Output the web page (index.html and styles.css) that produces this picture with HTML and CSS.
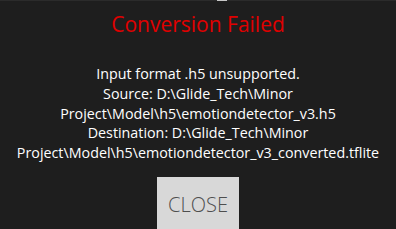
FILE: index.html
```html
<!DOCTYPE html>
<html>
<head>
<meta charset="utf-8">
<link rel="stylesheet" href="styles.css">
</head>
<body>
<div class="dialog">
  <div class="topbar"><span class="grip"></span></div>
  <h1 class="title">Conversion Failed</h1>
  <p class="message">Input format .h5 unsupported.<br>Source: D:\Glide_Tech\Minor Project\Model\h5\emotiondetector_v3.h5<br>Destination: D:\Glide_Tech\Minor Project\Model\h5\emotiondetector_v3_converted.tflite</p>
  <div class="actions"><button class="close">CLOSE</button></div>
</div>
</body>
</html>
```
FILE: styles.css
```css
html, body {
  margin: 0;
  padding: 0;
  background: #1e1e1e;
  height: 100%;
  overflow: hidden;
}
.dialog {
  display: flex;
  flex-direction: column;
  align-items: center;
  font-family: "Open Sans", "Noto Sans", sans-serif;
}
.topbar {
  width: 100%;
  height: 1px;
  background: #2b2b2b;
  display: flex;
  justify-content: flex-start;
}
.grip {
  margin-left: 217px;
  width: 10px;
  height: 1px;
  background: #c8c8c8;
}
.title {
  margin: 8px 0 0;
  font-size: 21px;
  font-weight: 400;
  color: #e00000;
  line-height: 30px;
}
.message {
  margin: 25px 0 0;
  width: 380px;
  text-align: center;
  color: #ffffff;
  font-size: 14.3px;
  line-height: 19.8px;
}
.actions {
  margin-top: 14px;
}
.close {
  width: 82px;
  height: 56px;
  border: none;
  background: #d8d8d8;
  color: #4e4e4e;
  font-family: "Open Sans", "Noto Sans", sans-serif;
  font-size: 20px;
  font-weight: 300;
  padding: 0;
}
```
